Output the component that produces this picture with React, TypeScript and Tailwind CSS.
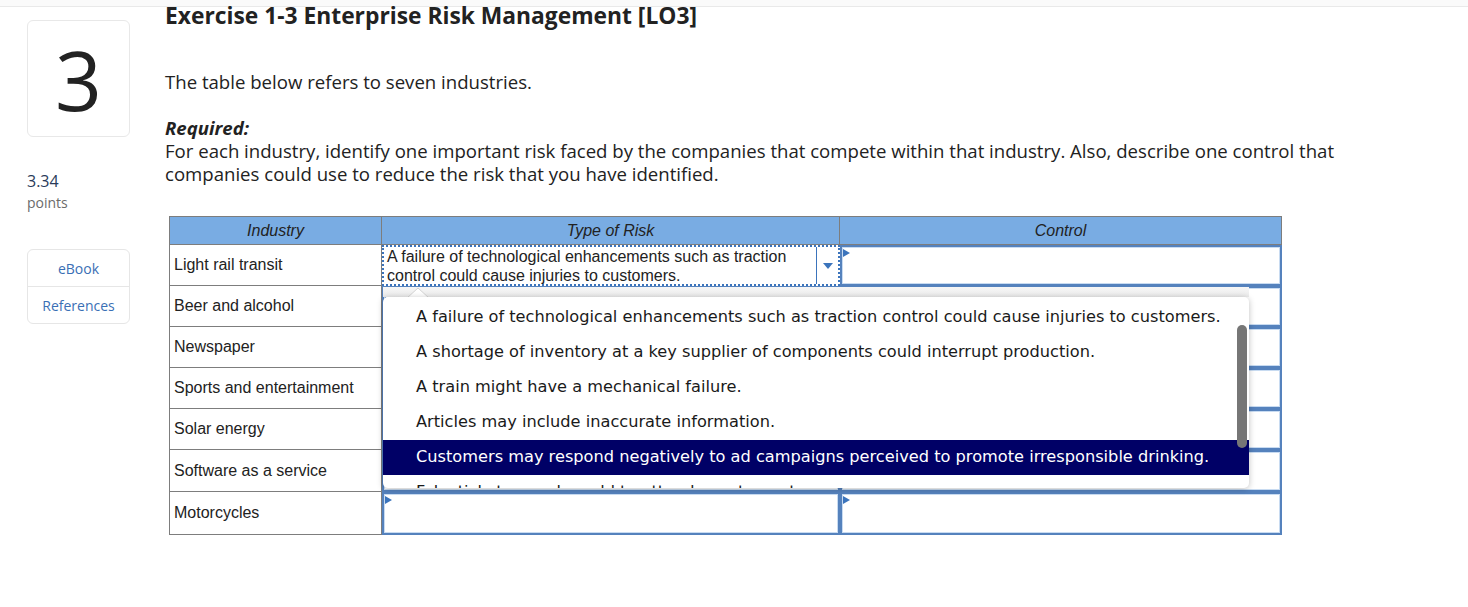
import React from 'react'

const rows = [
  { name: 'Light rail transit', h: 41 },
  { name: 'Beer and alcohol', h: 41 },
  { name: 'Newspaper', h: 41 },
  { name: 'Sports and entertainment', h: 41 },
  { name: 'Solar energy', h: 41 },
  { name: 'Software as a service', h: 42 },
  { name: 'Motorcycles', h: 43 },
]

const options = [
  'A failure of technological enhancements such as traction control could cause injuries to customers.',
  'A shortage of inventory at a key supplier of components could interrupt production.',
  'A train might have a mechanical failure.',
  'Articles may include inaccurate information.',
  'Customers may respond negatively to ad campaigns perceived to promote irresponsible drinking.',
  'Fake tickets may be sold to attendees at events.',
]

function Marker() {
  return (
    <span className="absolute left-[1px] top-[2px] h-0 w-0 border-y-[4px] border-l-[7px] border-y-transparent border-l-[#3b74bc]" />
  )
}

function InputCell({ w }: { w: string }) {
  return (
    <div className={`relative ${w} h-full border-2 border-[#5582bd] bg-white shadow-[inset_0_0_0_1px_#c8dbf1]`}>
      <Marker />
    </div>
  )
}

export default function App() {
  return (
    <div className="min-h-[607px] bg-white text-[#222]" style={{ fontFamily: '"Open Sans", sans-serif' }}>
      <div className="h-[7px] border-b border-[#e9e9e9] bg-[#fafafa]" />

      <div className="flex">
        {/* Sidebar */}
        <div className="w-[165px] shrink-0 pl-[27px]">
          <div className="mt-[13px] flex h-[117px] w-[103px] items-center justify-center rounded-md border border-[#e8e8e8]">
            <span className="text-[82px] font-normal leading-none text-[#222]">3</span>
          </div>
          <div className="mt-[34px] text-[16px] leading-[20px] text-[#2a3b5a]">3.34</div>
          <div className="mt-[2px] text-[14px] leading-[20px] text-[#6b6b6b]">points</div>
          <div className="mt-[36px] w-[103px] rounded-md border border-[#e6e6e6] text-[14px] text-[#3a6fb5]">
            <div className="flex h-[37px] items-center justify-center border-b border-[#e6e6e6]">eBook</div>
            <div className="flex h-[36px] items-center justify-center">References</div>
          </div>
        </div>

        {/* Main */}
        <div className="flex-1">
          <h1 className="mt-[-3px] text-[22.8px] font-bold leading-[24px] text-[#222]">
            Exercise 1-3 Enterprise Risk Management [LO3]
          </h1>
          <p className="mt-[42px] text-[18.6px] leading-[23px]">The table below refers to seven industries.</p>
          <p className="mt-[23px] text-[18.6px] font-bold italic leading-[23px]">Required:</p>
          <p className="w-[1200px] text-[18.6px] leading-[23px]">
            For each industry, identify one important risk faced by the companies that compete within that industry. Also,
            describe one control that companies could use to reduce the risk that you have identified.
          </p>

          {/* Table */}
          <div
            className="relative ml-[4px] mt-[31px] w-[1113px] text-[16px]"
            style={{ fontFamily: '"Liberation Sans", Arial, sans-serif' }}
          >
            <div className="flex h-[29px] border border-[#7d7d7d] bg-[#79ace3] italic text-[#222]">
              <div className="flex w-[212px] items-center justify-center border-r border-[#7d7d7d]">Industry</div>
              <div className="flex w-[458px] items-center justify-center border-r border-[#7d7d7d]">Type of Risk</div>
              <div className="flex flex-1 items-center justify-center">Control</div>
            </div>

            {rows.map((r, i) => (
              <div key={r.name} className="flex" style={{ height: r.h }}>
                <div className="flex w-[213px] items-center border-x border-b border-[#7d7d7d] px-[4px] text-[#222]">
                  {r.name}
                </div>
                {i === 0 ? (
                  <div className="relative flex h-full w-[458px] border-2 border-dotted border-[#3b74bc] bg-white">
                    <div className="flex-1 px-[3px] text-[16px] leading-[19px] text-[#222]">
                      A failure of technological enhancements such as traction control could cause injuries to customers.
                    </div>
                    <div className="flex w-[22px] items-center justify-center border-l border-[#3b74bc]">
                      <span className="h-0 w-0 border-x-[5px] border-t-[6px] border-x-transparent border-t-[#3b74bc]" />
                    </div>
                  </div>
                ) : (
                  <InputCell w="w-[458px]" />
                )}
                <InputCell w="flex-1" />
              </div>
            ))}

            {/* Dropdown */}
            <div className="absolute left-[214px] top-[71px] h-[10px] w-[866px] bg-gradient-to-b from-[#f6f6f6] to-[#ececec]" />
            <svg className="absolute left-[237px] top-[71px]" width="24" height="11" viewBox="0 0 24 11">
              <path d="M1 11 L12 1 L23 11 Z" fill="#fff" stroke="#d3d3d3" strokeWidth="1" />
            </svg>
            <div
              className="absolute left-[214px] top-[81px] h-[191px] w-[866px] overflow-hidden rounded-[5px] bg-white pt-[3px] shadow-[0_1px_6px_rgba(0,0,0,0.25)]"
              style={{ fontFamily: '"DejaVu Sans", Verdana, sans-serif' }}
            >
              {options.map((o, i) => (
                <div
                  key={o}
                  className={`flex h-[35px] items-center whitespace-nowrap pl-[33px] text-[16.2px] ${
                    i === 4 ? 'bg-[#000066] text-white' : 'text-[#1a1a1a]'
                  }`}
                >
                  {o}
                </div>
              ))}
              <div className="absolute right-[2px] top-[28px] h-[123px] w-[10px] rounded-full bg-[#767676]" />
            </div>
          </div>
        </div>
      </div>
    </div>
  )
}
